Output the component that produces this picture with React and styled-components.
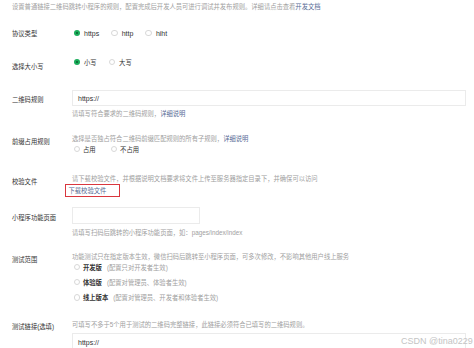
import React from "react";
import styled, { createGlobalStyle } from "styled-components";

const Global = createGlobalStyle`
  html, body { margin: 0; padding: 0; background: #fff; }
  * { box-sizing: border-box; }
`;

const Page = styled.div`
  position: relative;
  width: 474px;
  height: 348px;
  overflow: hidden;
  padding: 1.5px 8px 0 12px;
  font-family: "Liberation Sans", "Noto Sans CJK SC", sans-serif;
  font-size: 6.3px;
  line-height: 9px;
  color: #353535;
`;

const Intro = styled.div`
  color: #a0a0a0;
  white-space: nowrap;
`;

const Link = styled.span`
  color: #576b95;
`;

const Row = styled.div`
  display: grid;
  grid-template-columns: 60px 1fr;
  align-items: start;
  margin-top: ${(p) => p.$mt}px;
`;

const Label = styled.div`
  padding-top: ${(p) => p.$pt || 0}px;
  color: #333;
  white-space: nowrap;
`;

const Content = styled.div`
  display: flex;
  flex-direction: column;
  align-items: flex-start;
  min-width: 0;
`;

const Help = styled.div`
  color: #a0a0a0;
  white-space: nowrap;
  margin-top: ${(p) => p.$mt || 0}px;
`;

const RadioGroup = styled.div`
  display: flex;
  align-items: center;
  gap: ${(p) => p.$gap || 12}px;
  padding-left: 1.5px;
  margin-top: ${(p) => p.$mt || 0}px;
`;

const RadioItem = styled.label`
  display: flex;
  align-items: center;
  gap: ${(p) => p.$gap || 4}px;
  height: 9px;
  white-space: nowrap;
  color: #333;
  font-size: ${(p) => p.$fs || 6.3}px;
`;

const Circle = styled.span`
  position: relative;
  width: 6.5px;
  height: 6.5px;
  border-radius: 50%;
  flex: none;
  border: ${(p) => (p.$on ? "none" : "0.8px solid #d8d8d8")};
  background: ${(p) => (p.$on ? "#1aad5a" : "#fff")};
  &::after {
    content: "";
    display: ${(p) => (p.$on ? "block" : "none")};
    position: absolute;
    left: 50%;
    top: 50%;
    width: 2.4px;
    height: 2.4px;
    margin: -1.2px 0 0 -1.2px;
    border-radius: 50%;
    background: #0d5f30;
  }
`;

const Input = styled.div`
  width: ${(p) => p.$w || "100%"};
  height: ${(p) => p.$h}px;
  margin-top: ${(p) => p.$mt || 0}px;
  border: 1px solid #ebebeb;
  background: #fff;
  padding-left: 5px;
  display: flex;
  align-items: center;
  color: #333;
  font-size: 7px;
`;

const DownloadBox = styled.div`
  margin-top: 1.5px;
  margin-left: -7px;
  width: 55px;
  height: 13px;
  border: 1.2px solid #d9363e;
  padding-left: 2.5px;
  display: flex;
  align-items: center;
  color: #576b95;
  white-space: nowrap;
`;

const OptionList = styled.div`
  display: flex;
  flex-direction: column;
  gap: 6.2px;
  margin-top: 2px;
  padding-left: 1.5px;
`;

const OptName = styled.span`
  font-weight: bold;
  color: #333;
`;

const OptNote = styled.span`
  color: #a0a0a0;
  margin-left: 5px;
`;

const Watermark = styled.div`
  position: absolute;
  left: 401px;
  top: 336px;
  font-family: "Liberation Sans", sans-serif;
  font-size: 9px;
  line-height: 10px;
  color: #c4c4c4;
  white-space: nowrap;
`;

function Radio({ on, children, gap, fs }) {
  return (
    <RadioItem $gap={gap} $fs={fs}>
      <Circle $on={on} />
      <span>{children}</span>
    </RadioItem>
  );
}

const options = [
  ["开发版", "(配置只对开发者生效)"],
  ["体验版", "(配置对管理员、体验者生效)"],
  ["线上版本", "(配置对管理员、开发者和体验者生效)"],
];

export default function App() {
  return (
    <>
      <Global />
      <Page>
        <Intro>
          设置普通链接二维码跳转小程序的规则，配置完成后开发人员可进行调试并发布规则。详细请点击查看
          <Link>开发文档</Link>
        </Intro>

        <Row $mt={18}>
          <Label>协议类型</Label>
          <RadioGroup $gap={12}>
            <Radio on fs={7}>https</Radio>
            <Radio fs={7}>http</Radio>
            <Radio fs={7}>hiht</Radio>
          </RadioGroup>
        </Row>

        <Row $mt={20}>
          <Label $pt={4}>选择大小写</Label>
          <RadioGroup $gap={12}>
            <Radio on>小写</Radio>
            <Radio>大写</Radio>
          </RadioGroup>
        </Row>

        <Row $mt={19.5}>
          <Label $pt={4.5}>二维码规则</Label>
          <Content>
            <Input $h={16}>https://</Input>
            <Help $mt={2.5}>
              请填写符合要求的二维码规则，<Link>详细说明</Link>
            </Help>
          </Content>
        </Row>

        <Row $mt={16}>
          <Label $pt={3}>前缀占用规则</Label>
          <Content>
            <Help>
              选择是否独占符合二维码前缀匹配规则的所有子规则，<Link>详细说明</Link>
            </Help>
            <RadioGroup $mt={2} $gap={15}>
              <Radio on={false} gap={3}>占用</Radio>
              <Radio on={false} gap={3}>不占用</Radio>
            </RadioGroup>
          </Content>
        </Row>

        <Row $mt={20}>
          <Label $pt={3}>校验文件</Label>
          <Content>
            <Help>请下载校验文件，并根据说明文档要求将文件上传至服务器指定目录下，并确保可以访问</Help>
            <DownloadBox>下载校验文件</DownloadBox>
          </Content>
        </Row>

        <Row $mt={10}>
          <Label $pt={5.5}>小程序功能页面</Label>
          <Content>
            <Input $h={17} $w="128px" />
            <Help $mt={3.5}>请填写扫码后跳转的小程序功能页面，如：pages/index/index</Help>
          </Content>
        </Row>

        <Row $mt={15}>
          <Label $pt={3}>测试范围</Label>
          <Content>
            <Help>功能测试只在指定版本生效，微信扫码后跳转至小程序页面，可多次修改，不影响其他用户线上服务</Help>
            <OptionList>
              {options.map(([name, note]) => (
                <RadioItem key={name} $gap={3}>
                  <Circle />
                  <span>
                    <OptName>{name}</OptName>
                    <OptNote>{note}</OptNote>
                  </span>
                </RadioItem>
              ))}
            </OptionList>
          </Content>
        </Row>

        <Row $mt={18.6}>
          <Label $pt={2}>测试链接(选填)</Label>
          <Content>
            <Help>可填写不多于5个用于测试的二维码完整链接，此链接必须符合已填写的二维码规则。</Help>
            <Input $h={19} $mt={3.5}>https://</Input>
          </Content>
        </Row>

        <Watermark>CSDN @tina0229</Watermark>
      </Page>
    </>
  );
}
